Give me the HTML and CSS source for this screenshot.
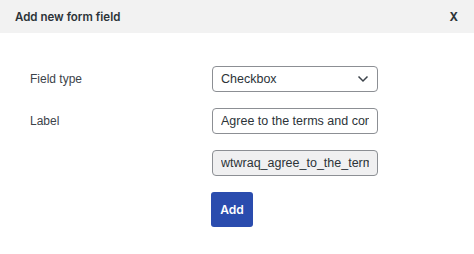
FILE: index.html
```html
<!DOCTYPE html>
<html lang="en">
  <head>
    <meta charset="UTF-8" />
    <title>Add new form field</title>
    <link rel="stylesheet" href="styles.css">
  </head>
  <body>
    <div class="modal">
      <div class="modal-head">
        <span class="title">Add new form field</span>
        <span class="close">X</span>
      </div>
      <div class="modal-body">
        <div class="row">
          <label class="lbl">Field type</label>
          <div class="select">
            <span>Checkbox</span>
            <svg width="12" height="8" viewBox="0 0 12 8"><path d="M1.5 1.5 L6 6 L10.5 1.5" fill="none" stroke="#3c434a" stroke-width="1.5"/></svg>
          </div>
        </div>
        <div class="row">
          <label class="lbl">Label</label>
          <input class="input" type="text" value="Agree to the terms and conditions" />
        </div>
        <div class="row">
          <span class="lbl"></span>
          <input class="input readonly" type="text" value="wtwraq_agree_to_the_terms_and_conditions" readonly />
        </div>
        <div class="row">
          <span class="lbl"></span>
          <button class="btn">Add</button>
        </div>
      </div>
    </div>
  </body>
</html>
```

FILE: styles.css
```css
* {
  padding: 0;
  margin: 0;
  box-sizing: border-box;
}
body {
  background-color: #fff;
  font-family: "Liberation Sans", Arial, sans-serif;
  color: #1d2327;
}
.modal-head {
  display: flex;
  justify-content: space-between;
  align-items: center;
  height: 33px;
  padding: 0 16px 0 15px;
  background-color: #f2f2f2;
}
.title,
.close {
  font-family: Inter, "Liberation Sans", sans-serif;
  font-size: 11.5px;
  font-weight: 600;
  color: #2c3338;
}
.close {
  font-weight: 700;
}
.modal-body {
  padding: 33px 0 0 30px;
}
.row {
  display: flex;
  align-items: center;
  margin-bottom: 16px;
}
.lbl {
  width: 182px;
  font-size: 12px;
  color: #3c434a;
}
.select,
.input {
  width: 166px;
  height: 26px;
  border: 1px solid #8c8f94;
  border-radius: 4px;
  background: #fff;
  font-family: inherit;
  font-size: 12.5px;
  color: #2c3338;
  padding: 0 8px;
}
.select {
  display: flex;
  justify-content: space-between;
  align-items: center;
  padding-right: 8px;
}
.input {
  outline: none;
}
.readonly {
  background-color: #f0f0f1;
}
.btn {
  width: 42px;
  height: 35px;
  border: none;
  border-radius: 3px;
  background-color: #2a4cae;
  color: #fff;
  font-family: Inter, "Liberation Sans", sans-serif;
  font-size: 12px;
  font-weight: 600;
  margin-left: -1px;
}
```
